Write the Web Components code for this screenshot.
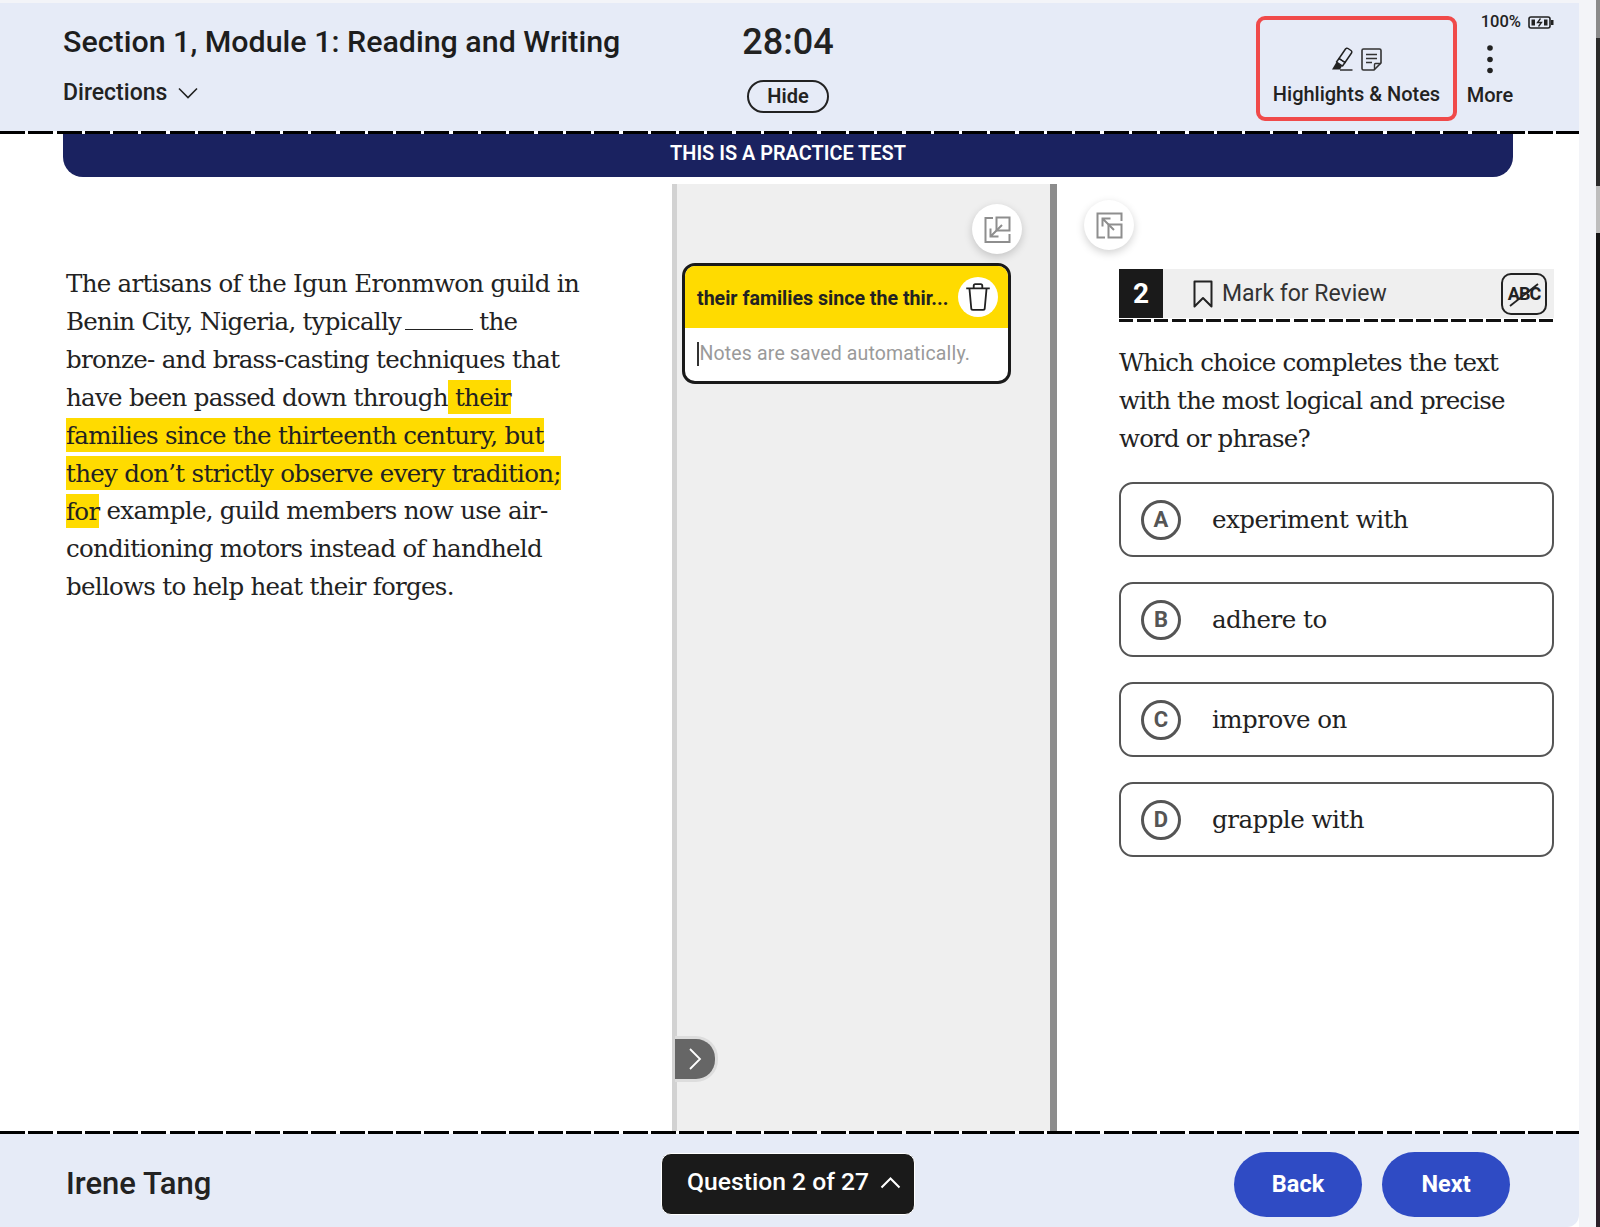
<!DOCTYPE html>
<html><head><meta charset="utf-8">
<style>
html,body{margin:0;padding:0;background:#f3f4f8}
body{width:1600px;height:1227px;overflow:hidden;font-family:Roboto,sans-serif;color:#1a1a1a;display:flex;justify-content:space-between}
</style></head><body>
<sat-app></sat-app>
<edge-strip></edge-strip>
<script>
function def(name, css, html){
  customElements.define(name, class extends HTMLElement{
    constructor(){super();const r=this.attachShadow({mode:'open'});r.innerHTML='<style>'+css+'</style>'+html;
      const c=r.querySelector('.c[data-from-host]'); if(c) c.textContent=this.getAttribute('letter')||'';}
  });
}
const dash='repeating-linear-gradient(90deg,#000 0,#000 25px,transparent 25px,transparent 28.3px)';
def('edge-strip',`:host{display:block;width:4px;height:1227px;background:linear-gradient(#8a8a8a 0,#8a8a8a 38px,#2a2a2a 38px,#2a2a2a 186px,#bdbdbd 186px,#bdbdbd 233px,#141414 233px,#141414 1150px,#2a1f28 1150px)}`,'');
def('dash-line',`:host{display:block;height:3px;background:${dash}}`,'');

def('top-bar',`
:host{display:grid;grid-template-columns:688px 200px 1fr;height:128px;background:#e6ebf7;position:relative;box-sizing:border-box}
.l{padding:19px 0 0 63px}
h1{margin:0;font:500 30.4px/40px Roboto,sans-serif;color:#1d1d1d;white-space:nowrap}
.dir{margin-top:17px;font:500 23px/28px Roboto,sans-serif;display:flex;align-items:center;gap:11px;color:#222}
.c{display:flex;flex-direction:column;align-items:center;padding-top:17px}
.time{font:500 36px/44px Roboto,sans-serif;color:#222}
.hide{margin-top:16px;width:82px;height:33px;box-sizing:border-box;border:2px solid #222;border-radius:17px;font:600 20px/29px Roboto,sans-serif;text-align:center;color:#222}
.r{display:flex;justify-content:flex-end;align-items:flex-start;padding:13px 66px 0 0}
.hn{width:201px;height:105px;box-sizing:border-box;border:4.5px solid #f04a4a;border-radius:9px;display:flex;flex-direction:column;align-items:center;padding-top:25px;margin-right:10px}
.ic{display:flex;gap:8px;height:28px;align-items:center}
.lab{font:500 20px/28px Roboto,sans-serif;color:#222;margin-top:7px;white-space:nowrap}
.more{width:46px;display:flex;flex-direction:column;align-items:center;padding-top:28px}
.st{position:absolute;right:25px;top:9px;display:flex;align-items:center;gap:7px;font:500 16.5px/20px Roboto,sans-serif;color:#222}
`,`
<div class="l"><h1>Section 1, Module 1: Reading and Writing</h1>
<div class="dir">Directions <svg width="20" height="12" viewBox="0 0 20 12"><path d="M1 1.500l9 9 9-9" fill="none" stroke="#222" stroke-width="1.6"/></svg></div></div>
<div class="c"><div class="time">28:04</div><div class="hide">Hide</div></div>
<div class="r">
 <div class="hn"><div class="ic">
  <svg width="21" height="24" viewBox="0 0 21 24"><path d="M7 11.500L13.500 2a1.800 1.800 0 0 1 2.500-.5l3 2a1.800 1.800 0 0 1 .5 2.500L13 15.500z" fill="none" stroke="#222" stroke-width="1.5" stroke-linejoin="round"/><path d="M7 11.500l6 4-2.500 3.500-6-4z" fill="none" stroke="#222" stroke-width="1.5" stroke-linejoin="round"/><path d="M4.500 15l5.500 4-2 3.500H0z" fill="#222"/><path d="M8 23h12.500" stroke="#222" stroke-width="1.4"/></svg>
  <svg width="21" height="23" viewBox="0 0 21 23"><path d="M2.500 1h16A1.500 1.500 0 0 1 20 2.500V15l-7 7H2.500A1.500 1.500 0 0 1 1 20.500V2.500A1.500 1.500 0 0 1 2.500 1z" fill="none" stroke="#333" stroke-width="1.6"/><path d="M5 6.500h11M5 10.500h11M5 14.500h6" stroke="#333" stroke-width="1.5"/><path d="M13.500 21.500V16.500a1 1 0 0 1 1-1H20" fill="none" stroke="#333" stroke-width="1.4"/></svg>
 </div><div class="lab">Highlights &amp; Notes</div></div>
 <div class="more">
  <svg width="8" height="30" viewBox="0 0 8 30"><circle cx="4" cy="4" r="2.8" fill="#222"/><circle cx="4" cy="15.500" r="2.800" fill="#222"/><circle cx="4" cy="26.500" r="2.800" fill="#222"/></svg>
  <div class="lab">More</div></div>
</div>
<div class="st">100% <svg width="26" height="13" viewBox="0 0 26 13"><rect x="1" y="1" width="21" height="11" rx="2" fill="none" stroke="#222" stroke-width="1.6"/><rect x="23" y="4" width="2.500" height="5" fill="#222"/><path d="M12.500 2.500L9.500 6.500h4L10.500 10.500" fill="none" stroke="#222" stroke-width="1.300"/><path d="M3.500 3.500h3.500v6H3.500zM16 3.500h3.500v6H16z" fill="#222"/></svg></div>
`);

def('practice-banner',`:host{display:block;margin:0 66px 0 63px;height:43px;background:#1a2260;border-radius:0 0 20px 20px;color:#fff;font:600 19.9px/40px Roboto,sans-serif;text-align:center}`,'<slot></slot>');

def('passage-pane',`
:host{display:block;box-sizing:border-box;width:672px;padding:88px 0 0 66px;font:24.5px/37.9px "DejaVu Serif",serif;color:#222;letter-spacing:-.71px;white-space:nowrap}
mark{background:#ffdb00;color:#222;padding:2.5px 0}
.b{display:inline-block;width:68px;border-bottom:1.5px solid #222;height:20px;margin:0 -1px 0 -3px}
`,`The artisans of the Igun Eronmwon guild in<br>Benin City, Nigeria, typically <span class="b"></span> the<br>bronze- and brass-casting techniques that<br>have been passed down through<mark> their<br>families since the thirteenth century, but<br>they don’t strictly observe every tradition;<br>for</mark> example, guild members now use air-<br>conditioning motors instead of handheld<br>bellows to help heat their forges.`);

def('round-btn',`:host{display:flex;align-items:center;justify-content:center;width:50px;height:50px;border-radius:50%;background:#fff;box-shadow:0 3px 8px rgba(0,0,0,.18)}`,'<slot></slot>');

def('note-card',`
:host{display:block;width:329px;height:121px;box-sizing:border-box;border:3px solid #1a1a1a;border-radius:13px;overflow:hidden;background:#fff}
.h{height:62px;background:#ffdb00;display:flex;align-items:center;justify-content:space-between;padding:0 10px 0 12px}
.t{font:700 19.6px/24px Roboto,sans-serif;color:#222;white-space:nowrap;padding-top:4px}
.tr{width:40px;height:40px;border-radius:50%;background:#fff;display:flex;align-items:center;justify-content:center}
.n{display:flex;align-items:center;padding:13px 0 0 12px;font:400 19.5px/25px Roboto,sans-serif;color:#9a9a9a;letter-spacing:.15px}
.car{width:1.5px;height:24px;background:#333;margin-right:1px}
`,`<div class="h"><span class="t">their families since the thir...</span><span class="tr"><svg width="26" height="30" viewBox="0 0 24 28"><path d="M1 6h22M8 6V3.500A1.500 1.500 0 0 1 9.500 2h5A1.500 1.500 0 0 1 16 3.500V6M4 6l1.700 18.500a1.500 1.500 0 0 0 1.500 1.500h9.600a1.500 1.500 0 0 0 1.500-1.500L20 6" fill="none" stroke="#222" stroke-width="1.7" stroke-linejoin="round"/></svg></span></div>
<div class="n"><span class="car"></span>Notes are saved automatically.</div>`);

def('notes-pane',`
:host{display:flex;flex-direction:column;box-sizing:border-box;width:378px;margin-top:7px;background:#efefef;border-left:5px solid #d2d2d2;position:relative;padding:0 0 0 5px}
round-btn{position:absolute;left:295px;top:20px}
note-card{margin-top:79px}
.tab{position:absolute;left:-2px;bottom:49px;width:40px;height:40px;background:#666;border:3px solid #ddd;border-left:none;border-radius:0 22px 22px 0;display:flex;align-items:center;justify-content:center}
`,`<round-btn><svg width="27" height="27" viewBox="0 0 27 27"><path d="M9 2H1.500v24h24V18M12.500 1.500h13v13h-13z" fill="none" stroke="#8e8e8e" stroke-width="2"/><path d="M18 9L6.500 20.500M6.500 12.500v8h8" fill="none" stroke="#8e8e8e" stroke-width="2"/></svg></round-btn>
<note-card></note-card>
<div class="tab"><svg width="14" height="24" viewBox="0 0 14 24"><path d="M2 2l10 10L2 22" fill="none" stroke="#fff" stroke-width="1.8"/></svg></div>`);

def('answer-option',`
:host{display:flex;align-items:center;box-sizing:border-box;height:75px;border:2px solid #555;border-radius:14px;padding-left:20px;background:#fff}
.c{width:40px;height:40px;box-sizing:border-box;border:3.5px solid #555;border-radius:50%;display:flex;align-items:center;justify-content:center;font:700 22px/1 Roboto,sans-serif;color:#555}
.t{margin-left:31px;font:24.5px/38px "DejaVu Serif",serif;letter-spacing:-.5px;color:#222;padding-top:1px}
`,`<span class="c" data-from-host></span><span class="t"><slot></slot></span>`);

def('question-pane',`
:host{display:block;flex:1;box-sizing:border-box;position:relative;padding:92px 25px 0 62px}
round-btn{position:absolute;left:27px;top:23px}
.bar{display:flex;align-items:center;height:49px;background:#efefef}
.num{width:44px;height:49px;background:#1a1a1a;color:#fff;font:700 28px/49px Roboto,sans-serif;text-align:center}
.bm{margin-left:30px;display:block}
.mk{margin-left:9px;font:400 23px/30px Roboto,sans-serif;color:#333;padding-top:1px}
.abc{margin-left:auto;margin-right:7px;width:46px;height:42px;box-sizing:border-box;border:2px solid #222;border-radius:10px;position:relative;display:flex;align-items:center;justify-content:center;font:700 18px/1 Roboto,sans-serif;color:#222;letter-spacing:-1px}
.abc svg{position:absolute;left:5px;top:5px}
dash-line{margin-top:1px;background:repeating-linear-gradient(90deg,#111 0,#111 14px,transparent 14px,transparent 17.5px)}
p{margin:22px 0 0;font:24.5px/38px "DejaVu Serif",serif;letter-spacing:-.82px;color:#222;white-space:nowrap}
.opts{margin-top:24px;display:flex;flex-direction:column;gap:25px}
`,`<round-btn><svg width="27" height="27" viewBox="0 0 27 27"><path d="M25.500 9V1.500h-24v24H9" fill="none" stroke="#8e8e8e" stroke-width="2"/><path d="M12.500 12.500h13v13h-13z" fill="none" stroke="#8e8e8e" stroke-width="2"/><path d="M18 18L6.500 6.500M6.500 14.500v-8h8" fill="none" stroke="#8e8e8e" stroke-width="2"/></svg></round-btn>
<div class="bar"><div class="num">2</div>
<svg class="bm" width="20" height="28" viewBox="0 0 20 28"><path d="M1.500 1.500h17v25L10 18l-8.500 8.500z" fill="none" stroke="#222" stroke-width="2" stroke-linejoin="round"/></svg>
<span class="mk">Mark for Review</span>
<div class="abc">ABC<svg width="32" height="28" viewBox="0 0 32 28"><path d="M2 26L30 4" stroke="#222" stroke-width="1.8"/></svg></div></div>
<dash-line></dash-line>
<p>Which choice completes the text<br>with the most logical and precise<br>word or phrase?</p>
<div class="opts">
<answer-option letter="A">experiment with</answer-option>
<answer-option letter="B">adhere to</answer-option>
<answer-option letter="C">improve on</answer-option>
<answer-option letter="D">grapple with</answer-option>
</div>`);

def('bottom-bar',`
:host{display:grid;grid-template-columns:1fr 254px 1fr;align-items:center;height:93px;background:#e6ebf7;padding:7px 69px 0 66px;box-sizing:border-box;border-bottom-right-radius:12px}
.n{font:500 31px/40px Roboto,sans-serif;color:#222}
.q{height:62px;background:#1a1a1a;border-radius:10px;color:#fff;font:500 24.7px/30px Roboto,sans-serif;display:flex;align-items:center;justify-content:flex-start;gap:11px;padding:0 0 3px 25px;margin-top:-1px;border:1px solid #fff;box-sizing:border-box;white-space:nowrap}
.bs{display:flex;justify-content:flex-end;gap:20px}
.b{width:128px;height:65px;border-radius:33px;background:#2f4bc4;color:#fff;font:700 23.5px/65px Roboto,sans-serif;text-align:center}
`,`<div class="n">Irene Tang</div>
<div class="q">Question 2 of 27 <svg width="21" height="13" viewBox="0 0 21 13"><path d="M1.500 11.500l9-9 9 9" fill="none" stroke="#fff" stroke-width="2"/></svg></div>
<div class="bs"><div class="b">Back</div><div class="b">Next</div></div>`);

def('sat-app',`
:host{display:flex;flex-direction:column;width:1579px;height:1224px;margin-top:3px;background:#fff;color:#222}
.main{flex:1;display:flex;min-height:0}
.div{width:7px;background:#8c8c8c;margin-top:7px}
`,`<top-bar></top-bar><dash-line></dash-line>
<practice-banner>THIS IS A PRACTICE TEST</practice-banner>
<div class="main"><passage-pane></passage-pane><notes-pane></notes-pane><div class="div"></div><question-pane></question-pane></div>
<dash-line></dash-line><bottom-bar></bottom-bar>`);
</script>
</body></html>
